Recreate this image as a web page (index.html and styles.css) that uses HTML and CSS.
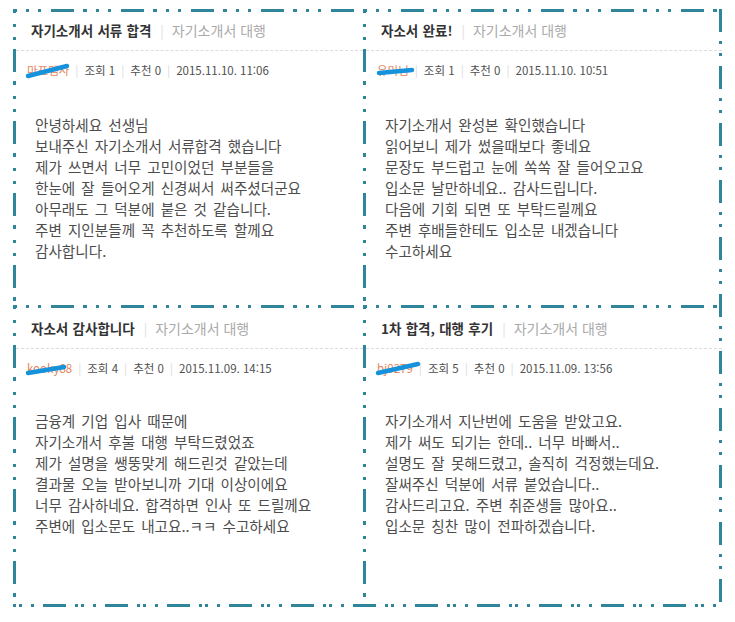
FILE: index.html
```html
<!DOCTYPE html>
<html lang="ko">
<head>
<meta charset="utf-8">
<title>자기소개서 대행 후기</title>
<link rel="stylesheet" href="styles.css">
</head>
<body>
<div class="board">
  <article class="card">
    <header class="head"><span class="title">자기소개서 서류 합격</span><span class="bar">|</span><span class="cat">자기소개서 대행</span></header>
    <div class="meta"><span class="name">마포멤사<svg class="scrib" width="48" height="20" viewBox="0 0 48 20"><line x1="1" y1="14" x2="40" y2="4"/></svg></span><span class="sep">|</span>조회 1<span class="sep">|</span>추천 0<span class="sep">|</span>2015.11.10. 11:06</div>
    <div class="body">
      <p>안녕하세요 선생님</p>
      <p>보내주신 자기소개서 서류합격 했습니다</p>
      <p>제가 쓰면서 너무 고민이었던 부분들을</p>
      <p>한눈에 잘 들어오게 신경써서 써주셨더군요</p>
      <p>아무래도 그 덕분에 붙은 것 같습니다.</p>
      <p>주변 지인분들께 꼭 추천하도록 할께요</p>
      <p>감사합니다.</p>
    </div>
  </article>
  <article class="card">
    <header class="head"><span class="title">자소서 완료!</span><span class="bar">|</span><span class="cat">자기소개서 대행</span></header>
    <div class="meta"><span class="name">유미님<svg class="scrib" width="48" height="20" viewBox="0 0 48 20"><line x1="2" y1="11" x2="35" y2="8"/></svg></span><span class="sep">|</span>조회 1<span class="sep">|</span>추천 0<span class="sep">|</span>2015.11.10. 10:51</div>
    <div class="body">
      <p>자기소개서 완성본 확인했습니다</p>
      <p>읽어보니 제가 썼을때보다 좋네요</p>
      <p>문장도 부드럽고 눈에 쏙쏙 잘 들어오고요</p>
      <p>입소문 날만하네요.. 감사드립니다.</p>
      <p>다음에 기회 되면 또 부탁드릴께요</p>
      <p>주변 후배들한테도 입소문 내겠습니다</p>
      <p>수고하세요</p>
    </div>
  </article>
  <article class="card">
    <header class="head"><span class="title">자소서 감사합니다</span><span class="bar">|</span><span class="cat">자기소개서 대행</span></header>
    <div class="meta"><span class="name">kooky88<svg class="scrib" width="48" height="20" viewBox="0 0 48 20"><line x1="1" y1="13" x2="37" y2="7"/></svg></span><span class="sep">|</span>조회 4<span class="sep">|</span>추천 0<span class="sep">|</span>2015.11.09. 14:15</div>
    <div class="body">
      <p>금융계 기업 입사 때문에</p>
      <p>자기소개서 후불 대행 부탁드렸었죠</p>
      <p>제가 설명을 쌩뚱맞게 해드린것 같았는데</p>
      <p>결과물 오늘 받아보니까 기대 이상이에요</p>
      <p>너무 감사하네요. 합격하면 인사 또 드릴께요</p>
      <p>주변에 입소문도 내고요..ㅋㅋ 수고하세요</p>
    </div>
  </article>
  <article class="card">
    <header class="head"><span class="title">1차 합격, 대행 후기</span><span class="bar">|</span><span class="cat">자기소개서 대행</span></header>
    <div class="meta"><span class="name">bj0279<svg class="scrib" width="48" height="20" viewBox="0 0 48 20"><line x1="1" y1="13" x2="41" y2="4"/></svg></span><span class="sep">|</span>조회 5<span class="sep">|</span>추천 0<span class="sep">|</span>2015.11.09. 13:56</div>
    <div class="body">
      <p>자기소개서 지난번에 도움을 받았고요.</p>
      <p>제가 써도 되기는 한데.. 너무 바빠서..</p>
      <p>설명도 잘 못해드렸고, 솔직히 걱정했는데요.</p>
      <p>잘써주신 덕분에 서류 붙었습니다..</p>
      <p>감사드리고요. 주변 취준생들 많아요..</p>
      <p>입소문 칭찬 많이 전파하겠습니다.</p>
    </div>
  </article>
</div>
</body>
</html>
```
FILE: styles.css
```css
html, body {
  margin: 0;
  padding: 0;
  background: #fff;
}

body {
  font-family: "Noto Sans CJK KR", "Noto Sans", sans-serif;
  color: #555;
}

.board {
  --line: #2f8599;
  margin: 9px 0 0 13px;
  width: 709px;
  height: 598px;
  display: grid;
  grid-template-columns: 350px 359px;
  grid-template-rows: 296px 302px;
  background:
    repeating-linear-gradient(180deg, var(--line) 0 23px, transparent 23px 32px, var(--line) 32px 35px, transparent 35px 44px, var(--line) 44px 47px, transparent 47px 57px) right top / 3px 100% no-repeat,
    repeating-linear-gradient(90deg, var(--line) 0 3px, transparent 3px 6px, var(--line) 6px 9px, transparent 9px 18px, var(--line) 18px 21px, transparent 21px 30px, var(--line) 30px 53px, transparent 53px 62px) left bottom / 100% 3px no-repeat;
}

.card {
  min-width: 0;
  background:
    repeating-linear-gradient(90deg, var(--line) 0 4px, transparent 4px 13px, var(--line) 13px 16px, transparent 16px 25px, var(--line) 25px 28px, transparent 28px 38px, var(--line) 38px 61px, transparent 61px 70px) left top / 100% 3px no-repeat,
    repeating-linear-gradient(180deg, var(--line) 0 4px, transparent 4px 15px, var(--line) 15px 18px, transparent 18px 28px, var(--line) 28px 31px, transparent 31px 40px, var(--line) 40px 63px, transparent 63px 72px) left top / 3px 100% no-repeat;
}

.head {
  margin-left: 3px;
  padding: 12px 0 9px 15px;
  line-height: 20px;
  border-bottom: 1px dashed #dcdcdc;
  white-space: nowrap;
}

.title {
  font-size: 13.5px;
  font-weight: 700;
  color: #333;
  word-spacing: 0.5px;
}

.bar {
  color: #dedede;
  font-size: 13px;
  margin: 0 8px 0 9px;
}

.cat {
  font-size: 14px;
  color: #aaaaaa;
}

.meta {
  margin-top: 9px;
  padding-left: 14px;
  line-height: 20px;
  font-size: 11.5px;
  color: #505050;
  white-space: nowrap;
}

.name {
  position: relative;
  color: #e5845a;
}

.scrib {
  position: absolute;
  left: 0;
  top: 0;
  overflow: visible;
}

.scrib line {
  stroke: #1592dc;
  stroke-width: 4.5;
  stroke-linecap: round;
}

.sep {
  color: #dadada;
  margin: 0 6px;
}

.body {
  margin-top: 32px;
  padding-left: 22px;
  font-size: 14.6px;
  line-height: 21px;
  word-spacing: 2px;
  color: #4d4d4d;
}

.body p {
  margin: 0;
  white-space: nowrap;
}

.card:nth-child(-n+2) .head {
  padding-top: 10px;
}

.card:nth-child(-n+2) .body {
  margin-top: 34px;
}
```
